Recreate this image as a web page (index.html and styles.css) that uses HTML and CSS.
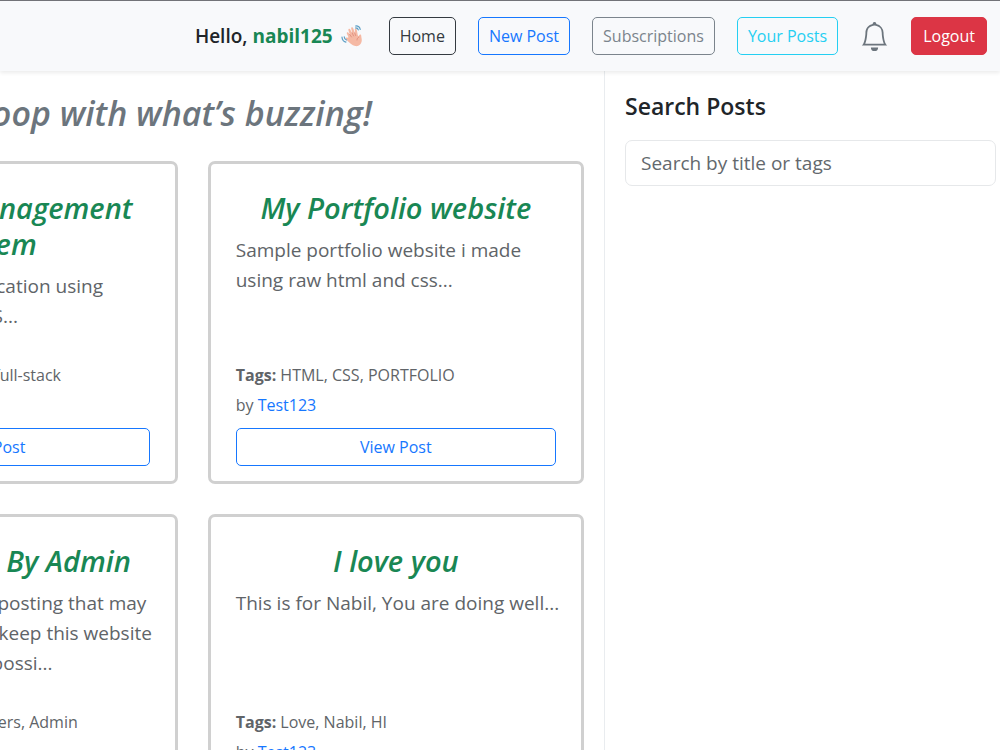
FILE: index.html
```html
<!DOCTYPE html>
<html lang="en">
<head>
<meta charset="utf-8">
<meta name="viewport" content="width=device-width, initial-scale=1">
<title>Posts</title>
<link rel="stylesheet" href="styles.css">
</head>
<body>
<header class="navbar">
  <p class="greeting">Hello, <strong class="user">nabil125</strong>
    <svg class="wave" viewBox="0 0 22 22" aria-hidden="true">
      <path d="M7.5 12.2 5.8 8.6c-.5-1.2 1-1.9 1.6-.9L9 10 7.4 5.2c-.4-1.4 1.3-2 1.9-.7l2 4.3-1.1-5.2c-.3-1.4 1.500-1.800 2-.4l1.800 5.300-.2-3.900c0-1.300 1.700-1.400 1.900-.1l1.100 5.500c.3 1.200.8 1.500 1.200.5.4-1.300 2.200-1.500 2.200.1 0 1.700.9 3.600.5 5.700-.6 3.500-3.300 5.400-6.500 4.700-3.200-.5-5.600-3.500-9.300-6.800-1-1 .3-2.200 1.400-1.500z" fill="#f5b9a4"/>
      <path d="M10.500 12 8.600 9.300M12.600 11l-1.500-3.200M14.700 10.600l-1-2.700M16 15c.1-1.500.7-2.400 1.900-2.900" fill="none" stroke="#dc8979" stroke-width=".8" stroke-linecap="round"/>
      <path d="M1 12.200c.2 2.600 1.500 4.300 3.900 5M3.200 11.800c.1 1.600.9 2.700 2.300 3.200M14.600 1c2.400-.2 4 1 4.600 3.300M14.700 2.900c1.400 0 2.300.7 2.600 2" fill="none" stroke="#5b9fc5" stroke-width="1.200" stroke-linecap="round"/>
    </svg>
  </p>
  <nav class="actions" aria-label="Main">
    <a class="btn btn-dark" href="#">Home</a>
    <a class="btn btn-primary" href="#">New Post</a>
    <a class="btn btn-secondary" href="#">Subscriptions</a>
    <a class="btn btn-info" href="#">Your Posts</a>
    <button class="bell" type="button" aria-label="Notifications">
      <svg viewBox="0 0 16 16" aria-hidden="true"><path fill="currentColor" d="M8 16a2 2 0 0 0 2-2H6a2 2 0 0 0 2 2M8 1.918l-.797.161A4 4 0 0 0 4 6c0 .628-.134 2.197-.459 3.742-.16.767-.376 1.566-.663 2.258h10.244c-.287-.692-.502-1.490-.663-2.258C12.134 8.197 12 6.628 12 6a4 4 0 0 0-3.203-3.920zM14.220 12c.223.447.481.801.78 1H1c.299-.199.557-.553.78-1C2.680 10.200 3 6.880 3 6c0-2.420 1.720-4.440 4.005-4.901a1 1 0 1 1 1.990 0A5 5 0 0 1 13 6c0 .88.320 4.200 1.220 6"/></svg>
    </button>
    <button class="btn btn-danger" type="button">Logout</button>
  </nav>
</header>
<div class="page">
  <main class="feed">
    <h1 class="tagline">loop with what’s buzzing!</h1>
    <div class="cards">
      <article class="card">
        <h2 class="card-title">Student Management System</h2>
        <p class="card-text">Fullstack web application using HTML, Java and CSS...</p>
        <p class="meta"><strong>Tags:</strong> Java, TS, Spring, full-stack</p>
        <p class="meta">by <a href="#">Test123</a></p>
        <a class="btn btn-primary btn-view" href="#">View Post</a>
      </article>
      <article class="card">
        <h2 class="card-title">My Portfolio website</h2>
        <p class="card-text">Sample portfolio website i made using raw html and css...</p>
        <p class="meta"><strong>Tags:</strong> HTML, CSS, PORTFOLIO</p>
        <p class="meta">by <a href="#">Test123</a></p>
        <a class="btn btn-primary btn-view" href="#">View Post</a>
      </article>
      <article class="card">
        <h2 class="card-title">A Guideline By Admin</h2>
        <p class="card-text">Please avoid every posting that may offend others, and keep this website as comfortable as possi...</p>
        <p class="meta"><strong>Tags:</strong> Topics, Posts, Users, Admin</p>
        <p class="meta">by <a href="#">Admin</a></p>
        <a class="btn btn-primary btn-view" href="#">View Post</a>
      </article>
      <article class="card">
        <h2 class="card-title">I love you</h2>
        <p class="card-text">This is for Nabil, You are doing well...</p>
        <p class="meta"><strong>Tags:</strong> Love, Nabil, HI</p>
        <p class="meta">by <a href="#">Test123</a></p>
        <a class="btn btn-primary btn-view" href="#">View Post</a>
      </article>
    </div>
  </main>
  <aside class="sidebar">
    <label class="search-label" for="search">Search Posts</label>
    <input class="search" id="search" type="search" placeholder="Search by title or tags">
  </aside>
</div>
</body>
</html>
```
FILE: styles.css
```css
* { box-sizing: border-box; }
body {
  margin: 0;
  height: 100vh;
  overflow: hidden;
  display: flex;
  flex-direction: column;
  background: #fff;
  color: #212529;
  font-family: "Open Sans", "Noto Sans", sans-serif;
  font-size: 19px;
}
h1, h2, p { margin: 0; }
a { color: #1677ff; text-decoration: none; }

.navbar {
  flex: none;
  z-index: 1;
  display: flex;
  align-items: center;
  justify-content: flex-end;
  gap: 26px;
  padding: 16px 13px;
  border-top: 1px solid #727378;
  background: #f8f9fb;
  box-shadow: 0 2px 4px rgba(0, 0, 0, .08);
  white-space: nowrap;
}
.greeting { display: flex; align-items: center; gap: 5px; font-weight: 600; }
.user { color: #198754; font-weight: 700; }
.wave { width: 22px; height: 22px; margin-left: 3px; }
.actions { display: flex; align-items: center; gap: 22px; }
.btn {
  padding: 0 10px;
  border: 1px solid;
  border-radius: 5px;
  background: transparent;
  font-family: inherit;
  font-size: 16px;
  line-height: 36px;
  text-align: center;
}
.btn-dark { color: #343a40; }
.btn-primary { color: #1677ff; }
.btn-secondary { color: #7b848c; }
.btn-info { color: #25cff2; }
.btn-danger { padding: 0 11px; color: #fff; background: #dc3545; border-color: #dc3545; }
.bell { display: flex; padding: 0; border: 0; background: none; color: #6c757d; }
.bell svg { width: 29px; height: 29px; }

.page {
  flex: 1;
  min-height: 0;
  display: grid;
  grid-template-columns: minmax(0, 604fr) minmax(0, 396fr);
  grid-template-rows: minmax(0, 1fr);
}
.feed {
  display: flex;
  flex-direction: column;
  align-items: flex-end;
  gap: 25px;
  padding: 19px 20px 0 0;
  overflow: hidden;
}
.tagline {
  width: 134%;
  padding-right: 212px;
  color: #6c757d;
  font-size: 34px;
  font-style: italic;
  font-weight: 600;
  line-height: 46px;
  text-align: right;
}
.cards {
  flex: none;
  width: 134%;
  display: grid;
  grid-template-columns: 1fr 1fr;
  gap: 30px;
}
.card {
  display: flex;
  flex-direction: column;
  padding: 26px 25px 15px;
  border: 3px solid #d0d0d0;
  border-radius: 7px;
}
.card-title {
  color: #198754;
  font-size: 29px;
  font-style: italic;
  font-weight: 600;
  line-height: 36px;
  text-align: center;
  margin-bottom: 9px;
}
.card-text {
  flex: 1;
  margin: 0 -8px 29px 0;
  color: #606468;
  font-size: 19px;
  line-height: 30px;
}
.meta { color: #606468; font-size: 16px; line-height: 30px; }
.btn-view { margin-top: 8px; }

.sidebar {
  padding: 19px 4px 0 20px;
  border-left: 1px solid #e9ecef;
}
.search-label { display: block; font-size: 23px; font-weight: 600; line-height: 32px; }
.search {
  width: 100%;
  height: 46px;
  margin-top: 18px;
  padding: 0 15px;
  border: 1px solid #e6e8ea;
  border-radius: 7px;
  background: #fff;
  color: #212529;
  font-family: inherit;
  font-size: 19px;
}
.search::placeholder { color: #63686d; opacity: 1; }
```
